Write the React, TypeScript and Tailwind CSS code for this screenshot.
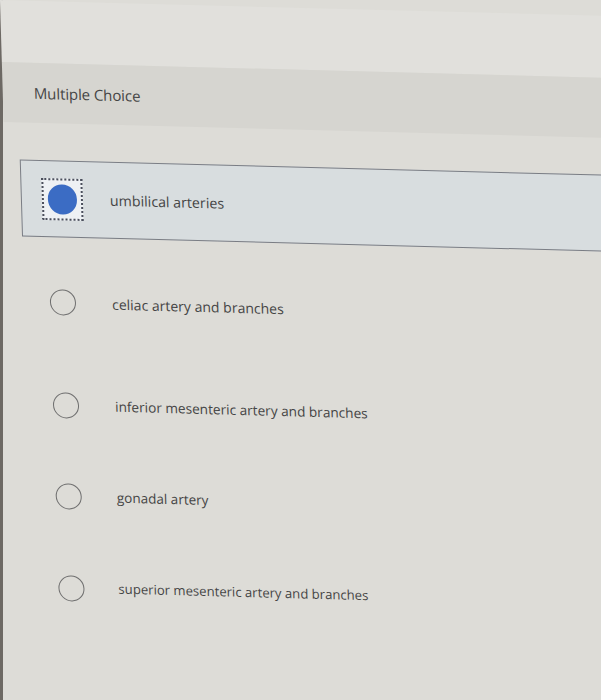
const options = [
  { label: 'celiac artery and branches', mt: 'mt-[50px]', size: 'text-[14px]', ml: 'ml-[36px]' },
  { label: 'inferior mesenteric artery and branches', mt: 'mt-[73px]', size: 'text-[13.6px]', ml: 'ml-[36px]' },
  { label: 'gonadal artery', mt: 'mt-[61px]', size: 'text-[13.5px]', ml: 'ml-[35px]' },
  { label: 'superior mesenteric artery and branches', mt: 'mt-[62px]', size: 'text-[13.1px]', ml: 'ml-[34px]' },
]

function Radio() {
  return <span className="block h-[26px] w-[26px] rounded-full border-[1.5px] border-[#6f6f6f]" />
}

export default function App() {
  return (
    <div className="relative h-[700px] w-[601px] overflow-hidden bg-[#dddcd7] font-['Open_Sans',sans-serif] text-[#454545]">
      <div className="absolute inset-y-0 left-0 w-[3px] bg-[#6d6964]" />
      <div className="h-[700px] origin-top-left skew-x-[1.7deg] skew-y-[1.5deg]">
        <div className="h-[62px] bg-[#e1e0dc]" />
        <div className="flex h-[60px] items-center bg-[#d6d5d0] pl-[31px] text-[15px] tracking-[-0.1px]">
          Multiple Choice
        </div>
        <div className="h-[37px]" />
        <div className="ml-[15px] flex h-[77px] w-[620px] items-center border-[1.5px] border-[#7a7d84] bg-[#d8dddf]">
          <div className="ml-[20px] grid h-[42px] w-[41px] place-items-center border-[2px] border-dotted border-[#4b4f5c] bg-[#eef1f4]">
            <span className="block h-[30px] w-[29px] rounded-full bg-[#3b6cc4]" />
          </div>
          <span className="ml-[27px] text-[14.2px]">umbilical arteries</span>
        </div>
        {options.map((o) => (
          <div key={o.label} className={`flex h-[30px] items-center ${o.mt}`}>
            <div className="ml-[41px]">
              <Radio />
            </div>
            <span className={`${o.ml} ${o.size}`}>{o.label}</span>
          </div>
        ))}
      </div>
    </div>
  )
}
